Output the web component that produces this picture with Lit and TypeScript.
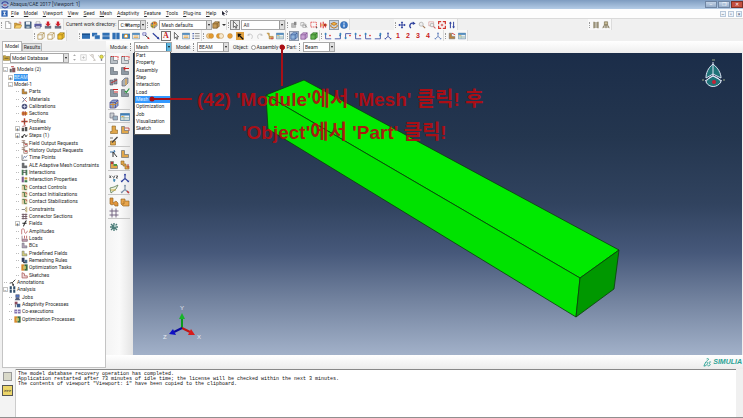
import { LitElement, html, svg, css, nothing, SVGTemplateResult } from "lit";
import { customElement, property } from "lit/decorators.js";
import { classMap } from "lit/directives/class-map.js";

const TAN = "#e0a64a";
const GREY = "#8e99a3";
const NAVY = "#2c3f9c";

const ell = (fill: string, extra: unknown = nothing) =>
  svg`<path d="M1.5 1.5h3v4h4v3h-7z" fill=${fill} stroke="#59616b" stroke-width=".6"/>${extra}`;
const redDots = svg`<path d="M2 1.5h7M9 1.5v3" stroke="#d22" stroke-width="1.2" stroke-dasharray="1.2 1"/>`;
const cube = (fill: string, line: string) =>
  svg`<path d="M1 3.5l2.5-2.5h5.5v5.5l-2.5 2.5h-5.5z" fill=${fill}/><path d="M1 3.5l2.5-2.5h5.5v5.5l-2.5 2.5h-5.5zM1 3.5h5.5v5.5M6.5 3.5l2.5-2.5" fill="none" stroke=${line} stroke-width=".8"/>`;
const win = (body: unknown) =>
  svg`<path d="M.5 1.5h9v7h-9z" fill="#eef3f8" stroke="#4a7696" stroke-width=".7"/><path d="M.5 1.5h9v2h-9z" fill="#3f7fb8"/>${body}`;
const axes = (a: string, b: string, mark: string) =>
  svg`<path d=${a} fill="none" stroke=${NAVY} stroke-width="1"/><path d=${b} fill="none" stroke="#2a8fc4" stroke-width="1.6"/><circle cx="7.5" cy="4.5" r="1" fill=${mark}/>`;
const triad = (c: string) =>
  svg`<path d="M5 1v4.500l-3.500 3M5 5.500l3.500 3" fill="none" stroke=${c} stroke-width="1.1"/><path d="M3.800 2.200l1.200-1.800 1.200 1.800zM.8 7.200l.2 2 2-.2zM9.200 7.200l-.2 2-2-.2z" fill=${c}/>`;
const chart = (c: string) =>
  svg`<path d="M1.500 1v8h7.500" fill="none" stroke="#555" stroke-width="1"/><path d="M3 7l2-4 1.500 2 2.500-3" fill="none" stroke=${c} stroke-width="1.200"/>`;

const ICONS: Record<string, SVGTemplateResult> = {
  app: svg`<path d="M1 4c1-4 7-4 8 0M1 6.500c1 3 7 3 8 0" fill="none" stroke="#38429a" stroke-width="1.300"/><path d="M3 5h4" stroke="#b3344a" stroke-width="1.200"/>`,
  vp: svg`<path d="M.5.500h9v9h-9z" fill="#2f64b5"/><path d="M3 3h4M3 7h4M5 3v4" stroke="#fff" stroke-width="1.200"/>`,
  fresh: svg`<path d="M2 .5h4l2.500 2.500v6.500h-6.500z" fill="#fff" stroke="#777" stroke-width=".7"/><path d="M6 .5v2.500h2.500" fill="none" stroke="#777" stroke-width=".7"/>`,
  open: svg`<path d="M.5 9v-6.500h3l1 1h3.500v1.500" fill="#d9a13d" stroke="#8c681f" stroke-width=".5"/><path d="M.5 9l2-4h7.500l-2 4z" fill="#f7cf6b" stroke="#8c681f" stroke-width=".5"/><path d="M6 1.500h2.500v2" fill="none" stroke="#c33" stroke-width=".8"/>`,
  save: svg`<path d="M1 1h8v8h-8z" fill="#4c6b8c" stroke="#2e4259" stroke-width=".6"/><path d="M2.500 1h5v3.500h-5z" fill="#e8eef4"/><path d="M3 6.500h4v2.500h-4z" fill="#a9b9c8"/>`,
  print: svg`<path d="M2.500 1h5v3h-5z" fill="#fff" stroke="#666" stroke-width=".5"/><path d="M.5 3.500h9v4h-9z" fill="#5a5aa5"/><path d="M2 6h6v3h-6z" fill="#c9c9e6" stroke="#445" stroke-width=".5"/>`,
  dbdown: svg`<path d="M1 6h8v3.500h-8z" fill="#6e7586"/><path d="M3.500.5h3v3h2l-3.500 3.500-3.500-3.500h2z" fill="#d0202c"/>`,
  palette: svg`<path d="M1 5c0-3 3-4.500 5.500-4s3 3 1.500 4-3 .5-2.500 2-2 2-3 1.200-1.500-2-1.500-3.200z" fill="#e3a83e" stroke="#6b5322" stroke-width=".6"/><circle cx="3" cy="3.500" r=".9" fill="#2c50b5"/><circle cx="6" cy="2.500" r=".9" fill="#c22"/><circle cx="2.800" cy="6.500" r=".9" fill="#2a9440"/><path d="M5 9l4.500-4" stroke="#444" stroke-width="1"/>`,
  box: cube("#c79a56", "#6a4e22"),
  arrow: svg`<path d="M3 .5v7.500l1.800-1.600 1.200 2.800 1.200-.6-1.200-2.600h2.300z" fill="#fff" stroke="#222" stroke-width=".8"/>`,
  greybox: svg`<path d="M2 3h5v5h-5z" fill="#bbb" stroke="#888" stroke-width=".6"/><path d="M5 1h3v4h-3z" fill="#888"/>`,
  ghost: svg`<path d="M1 2h4v4h-4zM3.500 4h4v4h-4z" fill="none" stroke="#999" stroke-width=".8"/><path d="M6 5l2.500 3" stroke="#666"/>`,
  redsel: svg`<path d="M1 1.500h7v6h-7z" fill="none" stroke="#e03131" stroke-width="1" stroke-dasharray="1.500 .8"/><path d="M7.500 7l2 1.500-1.800 1z" fill="#444"/>`,
  redbars: svg`<path d="M1 2v6M4 1v8M7 3v5" stroke="#d33" stroke-width="1.300"/><path d="M1 5h8" stroke="#e5a33a" stroke-width="1.200"/><path d="M5 3l4 2-4 2z" fill="#b02a2a"/>`,
  loop: svg`<path d="M1 3.500l4-2 4 2-4 2z" fill="#f6b242" stroke="#a05f10" stroke-width=".8"/><path d="M1 5v2l4 2 4-2v-2" fill="none" stroke="#c0761a" stroke-width="1.200"/>`,
  info: svg`<circle cx="5" cy="5" r="4.500" fill="#3b78c4" stroke="#21508f" stroke-width=".5"/><path d="M5 4.300v3.500M5 2v1.300" stroke="#fff" stroke-width="1.400"/>`,
  pan: svg`<path d="M5 1v8M1 5h8" stroke=${NAVY} stroke-width="1.300"/><path d="M3.500 2.500l1.500-2 1.500 2zM3.500 7.500l1.500 2 1.500-2zM2.500 3.500l-2 1.500 2 1.500zM7.500 3.500l2 1.500-2 1.500z" fill=${NAVY}/>`,
  rotate: svg`<path d="M3.500 9c-3-4 0-7 3.500-6" fill="none" stroke=${NAVY} stroke-width="1.600"/><path d="M6 .5l3.500 2.500-3.500 2z" fill=${NAVY}/>`,
  zoom: svg`<circle cx="4" cy="4" r="2.500" fill="#eee" stroke="#aaa" stroke-width=".9"/><path d="M6 6l3 3" stroke="#a77b5a" stroke-width="1.400"/>`,
  zoombox: svg`<path d="M1 1h6v5h-6z" fill="none" stroke="#c77" stroke-width=".6"/><circle cx="5" cy="5" r="2.300" fill="#eee" stroke="#999" stroke-width=".8"/><path d="M6.800 6.800l2.500 2.500" stroke="#c66" stroke-width="1.300"/>`,
  fit: svg`<path d="M.8 4v-3.200h3.200M6 .8h3.200v3.200M9.200 6v3.200h-3.200M4 9.200h-3.200v-3.200" fill="none" stroke="#d2342c" stroke-width="1.500"/><path d="M3.500 3.500h3v3h-3z" fill="#d77"/>`,
  updown: svg`<path d="M3 9v-7M7 1v7" stroke=${NAVY} stroke-width="1.200"/><path d="M1.200 3l1.800-2.500 1.800 2.500zM5.200 7l1.800 2.500 1.800-2.500z" fill=${NAVY}/>`,
  ladder: svg`<path d="M2.500 1v8M7.500 1v8M2.500 2.500h5M2.500 5h5M2.500 7.500h5" fill="none" stroke="#7f7556" stroke-width="1.400"/>`,
  stand: svg`<path d="M3 1h4v4h-4z" fill="#c9bd98" stroke="#7f7556" stroke-width=".9"/><path d="M1 9l2-4h4l2 4M1 7.500h8M5 5v4" fill="none" stroke="#7f7556" stroke-width="1"/>`,
  wire: cube("none", "#a47f33"),
  hidden: cube("#fff", "#a47f33"),
  shaded: cube("#f4c22e", "#8f6f16"),
  vp1: svg`<path d="M0 2h10v6.500h-10z" fill="#2f6fb4"/><path d="M0 2h10v1.500h-10z" fill="#174a83"/>`,
  vp2: svg`<path d="M0 1h6.500v4.500h-6.500z" fill="#2f6fb4"/><path d="M3.300 3.800h6.700v5.200h-6.700z" fill="#2f6fb4" stroke="#fff" stroke-width=".5"/>`,
  vp3: svg`<path d="M.5 1h9v3.700h-9zM.5 5.400h9v3.700h-9z" fill="#2f6fb4"/>`,
  vp4: svg`<path d="M.5 1h4.100v8h-4.100zM5.400 1h4.100v8h-4.100z" fill="#2f6fb4"/>`,
  vpring: svg`<path d="M0 2h10v6.500h-10z" fill="#3f7fb8"/><circle cx="5" cy="5.200" r="2.200" fill="#fff" stroke="#e39a2e" stroke-width="1.200"/>`,
  vpwin: win(svg`<path d="M2 5h6M2 7h6" stroke="#e39a2e" stroke-width="1"/>`),
  ann: svg`<path d="M1 1h4v3h-4z" fill="none" stroke="#44a" stroke-width=".8"/><path d="M4 4l4.500 4" stroke="#222" stroke-width="1.100"/><path d="M9.500 9l-3-.6 2-2z" fill="#c22"/>`,
  diag: svg`<path d="M1 1.500l7 6.500" stroke=${NAVY} stroke-width="1.500"/><path d="M9.500 9.500l-3.500-1 2.300-2.500z" fill=${NAVY}/>`,
  list: svg`<path d="M3.500 2h6M3.500 5h6M3.500 8h6" stroke="#666" stroke-width=".9"/><path d="M.7 2h1.500M.7 5h1.500M.7 8h1.500" stroke="#223f9c" stroke-width="1.400"/>`,
  both: svg`<circle cx="3.500" cy="5" r="3" fill="#f0ce92" stroke="#b98333" stroke-width=".6"/><circle cx="6.500" cy="5" r="3" fill="#e39a2e" stroke="#b98333" stroke-width=".6"/>`,
  inter: svg`<circle cx="3.500" cy="5" r="3" fill="#e39a2e" stroke="#b98333" stroke-width=".6"/><circle cx="6.500" cy="5" r="3" fill="#f7e9cf" stroke="#b98333" stroke-width=".6"/>`,
  ball: svg`<circle cx="5" cy="5" r="3" fill="#e8a03a" stroke="#b98333" stroke-width=".6"/>`,
  wand: svg`<path d="M0 0h10v10h-10z" fill="#e0a040"/><path d="M9 9l-5-5" stroke="#111" stroke-width="1.600"/><path d="M2 2l5 .5-4.500 4.500z" fill="#111"/>`,
  undo: svg`<path d="M2.500 3.500c4-2.500 7 1 4.500 5" fill="none" stroke="#c4c4c4" stroke-width="1.200"/><path d="M1 4l3-2.500.3 3.500z" fill="#c4c4c4"/>`,
  redo: svg`<path d="M7.500 3.500c-4-2.500-7 1-4.500 5" fill="none" stroke="#c4c4c4" stroke-width="1.200"/><path d="M9 4l-3-2.500-.3 3.500z" fill="#c4c4c4"/>`,
  steps: svg`<path d="M1 1.500h3v7h5v-3h-5" fill="#e3b65c" stroke="#93691c" stroke-width=".7"/><path d="M6 7h3v2h-3z" fill="#c55"/>`,
  meshblue: cube("#8fb4dd", "#2a4c8c"),
  meshpurple: cube("#c9a2d4", "#7a4a8c"),
  meshgreen: cube("#67b552", "#23641b"),
  ax1: axes("M2 1v7.500h7", "M.8 2.500h2.400", "#d22"),
  ax2: axes("M8 1v7.500h-7", "M6.800 2.500h2.400", "#27a"),
  ax3: axes("M2 9v-7h7", "M.8 7.500h2.400", "#d22"),
  triad: triad(NAVY),
  triadGrey: triad("#5a79b8"),
  triadRed: svg`${triad("#7a8fa8")}<path d="M7 7l2 2" stroke="#c33" stroke-width="1.200"/>`,
  Lbrown: ell("#b9813c", svg`<path d="M5 1.500l4 2" stroke="#c22" stroke-width="1"/>`),
  cursorhelp: svg`<path d="M1.500 1v6.500l1.600-1.400 1 2.400 1-.5-1-2.200h2z" fill="#223"/><path d="M6.500 2.500c0-2 3-1.500 2.500 0-.3 1-1.300 1-1.300 2.200M7.700 6v1.200" fill="none" stroke="#223" stroke-width="1.100"/>`,

  seedPart: ell("#b9c0c6", redDots),
  seedEdge: ell("#d5d9dc", redDots),
  meshPart: ell(GREY),
  meshRegion: ell(GREY, svg`<path d="M4 2.500h5M5.500 1l-1.800 1.500 1.800 1.500" stroke="#c22" stroke-width="1" fill="none"/>`),
  assignCtl: svg`<path d="M1 3h3v5h-3zM5 2h3v5h-3z" fill=${GREY} stroke="#445" stroke-width=".5"/><path d="M2 6l6-3" stroke="#b33" stroke-width="1"/>`,
  assignStack: svg`<path d="M2 4l3-3h3v5l-3 3h-3z" fill="#a9b0b6" stroke="#556" stroke-width=".6"/><path d="M6 2v6" stroke="#e0a64a" stroke-width="1.300"/>`,
  assignElem: ell(GREY, svg`<path d="M4 1.500h5M5 4h4" stroke="#c22" stroke-width="1.200"/>`),
  verify: ell(GREY, svg`<path d="M5 3l1.300 1.500 3-4" fill="none" stroke="#2a9440" stroke-width="1.200"/>`),
  fullmesh: svg`${cube("#8ba3d4", "#4c4c8c")}<path d="M1 5.500h5.500l2.500-2.500M4 3.500v5.500" fill="none" stroke="#d28b2d" stroke-width=".9"/>`,
  pair: svg`<path d="M1 1h4v5h-4z" fill="#c9ced2" stroke="#667" stroke-width=".6"/><path d="M4 4h4.500v4h-4.500z" fill="#9eb4c4" stroke="#667" stroke-width=".6"/>`,
  table: win(svg`<path d="M1 5.500h8M1 7h8M4 3.500v5" stroke="#8a9" stroke-width=".6"/><path d="M1.500 4h2v1h-2z" fill="#e3a83e"/>`),
  goldA: svg`<path d="M3 1h3.500v4h2v3.500h-7v-2h1.500z" fill=${TAN} stroke="#8a6321" stroke-width=".6"/>`,
  goldB: ell(TAN, svg`<path d="M5 3h4v3" fill="none" stroke="#b33" stroke-width=".8"/>`),
  goldC: svg`<path d="M1.500 5h5v4h-5z" fill=${TAN} stroke="#8a6321" stroke-width=".6"/><path d="M3 6.500l5.500-5.500" stroke="#444" stroke-width="1.200"/><path d="M1 2h3" stroke="#777"/>`,
  pick: svg`<path d="M1 3h5l-1-2" fill="none" stroke="#3570a8" stroke-width="1"/><path d="M4 3l4 5M4 3v5" stroke="#333" stroke-width="1"/>`,
  goldL: ell(TAN),
  goldG: ell(TAN, svg`<path d="M2 2h2v2h-2z" fill="#b33"/><path d="M5 4h3v2h-3z" fill="#4c9a3c"/>`),
  goldZ: svg`<path d="M1 1h3v3h2v2h3v3h-4v-3h-2v-1.500h-2z" fill=${TAN} stroke="#8a6321" stroke-width=".6"/><path d="M8 4v4" stroke="#b33" stroke-width=".9"/>`,
  xyz: svg`<path d="M.5 2.500l1.500 2.500M2 2.500l-1.500 2.500M3.500 3l1 1.500M6 2.500l-1.500 3M7 3h2l-2 2h2" fill="none" stroke="#333" stroke-width=".7"/><path d="M4 7h2.500M5.200 6v3" stroke="#27a" stroke-width="1"/>`,
  plane: svg`<path d="M1 4l4-1 4-2-2 4-5 4z" fill="#eef4e0" stroke="#5f7c54" stroke-width=".8"/><path d="M2 6h5" stroke="#caa22c" stroke-width=".9"/>`,
  bend: svg`<path d="M1 1h3v5l3-2 2 2v3h-3l-1-2-2 1-2-1z" fill="#e2953c" stroke="#8a5a1a" stroke-width=".6"/>`,
  folder: svg`<path d="M1 2h4v2h4v5h-6l-2-2z" fill="#e8a54c" stroke="#8a5a1a" stroke-width=".6"/><path d="M4 4v3l-2 0" fill="none" stroke="#8a5a1a" stroke-width=".6"/>`,
  hash: svg`<path d="M3 .5v2.500h-2.500M7 .5v2.500h2.500M3 9.500v-2.500h-2.500M7 9.500v-2.500h2.500M3 3h4v4h-4z" fill="none" stroke="#6a5a78" stroke-width=".9"/>`,
  gear: svg`<path d="M2 2l6 6M8 2l-6 6M5 1v8M1 5h8" stroke="#4c7c78" stroke-width="1.400"/><circle cx="6" cy="4" r="1.200" fill="#a6c4c0"/>`,

  db: svg`<path d="M.5 2.500h3l1 1h5v5.500h-9z" fill="#d9b13d" stroke="#6d5a1c" stroke-width=".8"/><path d="M2 6h6" stroke="#333" stroke-width="1"/>`,
  sort: svg`<path d="M5 .5l2 2.500h-4zM5 9.500l2-2.500h-4z" fill="#aaa"/>`,
  filter: svg`<path d="M1 1h8v8h-8z" fill="#fafafa" stroke="#c0c0c0" stroke-width=".8"/><path d="M3 5h4M5 3v4" stroke="#aaa" stroke-width=".8"/>`,
  brush: svg`<path d="M1 1l4 3M3 1h3v4M5 4l4 5M6 9h3" fill="none" stroke="#b3aaa2" stroke-width="1"/>`,
  bulb: svg`<circle cx="5" cy="4" r="2.500" fill="#e6dd4c" stroke="#8a8a22" stroke-width=".8"/><path d="M4 7.500h2v2h-2z" fill="#556"/><path d="M0 2l1.500 1M10 2l-1.500 1" stroke="#999" stroke-width=".8"/>`,
  models: svg`<path d="M1 4h3v5h-3z" fill="#666"/><path d="M4.500 2.500h4.500v6.500h-4.500z" fill="#87545a"/><path d="M3 1h4" stroke="#b33" stroke-width="1.300"/>`,
  parts: ell("#c98a34"),
  materials: svg`<path d="M2 2l3 3-3 4M5 5l3-3" fill="none" stroke="#557" stroke-width="1.200"/><path d="M5 5l3.500 3.500" stroke="#c66" stroke-width="1.200"/>`,
  calib: svg`<circle cx="5" cy="5" r="4" fill="#52577f"/><path d="M2.500 5h5M5 2.500v5" stroke="#d6d9ee" stroke-width="1.100"/>`,
  sections: svg`<path d="M1 3h8v4h-8z" fill="#d88a2d"/><path d="M3 1.500v7M6 1.500v7" stroke="#9a2f2f" stroke-width="1.200"/>`,
  profiles: svg`<path d="M5 .5v9M.5 5h9" stroke="#b9402e" stroke-width="2"/><circle cx="5" cy="5" r="1.200" fill="#555"/>`,
  assembly: svg`<path d="M1 4h3.500v5h-3.500zM5.500 3h3.500v6h-3.500z" fill="#535353"/><path d="M2 2l5-1" stroke="#a55" stroke-width="1.300"/>`,
  stepsT: svg`<circle cx="2" cy="7" r="1.600" fill="#333"/><path d="M3 6l2-3 2 4 2-3" fill="none" stroke="#333" stroke-width="1.300"/>`,
  output: svg`<path d="M1 1h5M1 3.500h5M4 1v8h5v-4h-5" fill="none" stroke="#865" stroke-width="1"/><path d="M5.500 6.500h3" stroke="#c33" stroke-width="1.200"/>`,
  time: chart("#6d7fa5"),
  ale: ell("#6e6e6e"),
  inters: svg`<path d="M1 1h2.500v8h-2.500zM6.500 1h2.500v8h-2.500z" fill="#4a7c58"/><path d="M3 5h4M3 2.500h4" stroke="#333" stroke-width="1"/>`,
  interp: svg`<path d="M1 1h3v8h-3z" fill="#7a5a8c"/><path d="M5 2h4v3h-4z" fill="#c99a3a"/><path d="M5 6h4v3h-4z" fill="#3f7c4c"/>`,
  contact: svg`<path d="M1 1h8v8h-8z" fill="#d9c9a2"/><path d="M2 2h3v6h3" fill="none" stroke="#4c7c4a" stroke-width="1.400"/><path d="M6 2l3 2" stroke="#b5403a" stroke-width="1.200"/>`,
  constr: svg`<path d="M1 5h4l3-3M5 5l3 3" fill="none" stroke="#777" stroke-width="1.200"/><path d="M6.500 1h2.500v8h-2.500z" fill="#d0bd8c"/>`,
  conn: svg`<path d="M1 2h8M1 5h8M1 8h8M3 1v8M7 1v8" stroke="#6d5560" stroke-width="1.300"/>`,
  fields: svg`<path d="M3 9c2 0 2-8 5-8M2 4.500h6" fill="none" stroke="#222" stroke-width="1.500"/>`,
  amp: svg`<path d="M1 9v-7c3-2 4 0 4 3s3 4 4-1" fill="none" stroke="#b66" stroke-width="1.200"/>`,
  loads: svg`<path d="M1.500 1v8h7.500v-3h-7" fill="#c9a4b5" stroke="#645" stroke-width=".8"/><path d="M5 1v4M8 1v4" stroke="#a33" stroke-width="1"/>`,
  bcs: ell("#b5a4b8"),
  predef: ell("#d2ca7a"),
  remesh: svg`<path d="M1 1h4v6h-4z" fill="#333c5c"/><path d="M5 4h4v5h-4z" fill="#486c8c"/><path d="M3 8h3" stroke="#333" stroke-width="1.500"/>`,
  opt: svg`<path d="M.5.5h4.500v9h-4.500z" fill="#d8892c"/><path d="M5 .5h4.500v9h-4.500z" fill="#3c6c44"/><path d="M3 3h4v4h-4z" fill="#c9c36a"/>`,
  sketch: svg`<path d="M1.500 1v7.500h7.500v-3h-4v-3z" fill="#f2dada" stroke="#a35050" stroke-width="1"/>`,
  annot: svg`<path d="M1 6l4-1 4-4M5 5l1 4" fill="none" stroke="#333" stroke-width="1.300"/><circle cx="6" cy="8.500" r="1.300" fill="#333"/>`,
  analysis: svg`<path d="M1 .5h3v4h-3zM1 5.500h3v4h-3zM6 .5h3v4h-3zM6 5.500h3v4h-3z" fill="#33506c"/>`,
  jobs: svg`<path d="M2.500 1h5v4h-5z" fill="#5678c4" stroke="#334" stroke-width=".6"/><path d="M1 9l2-3.500h4l2 3.500z" fill="#55607c"/>`,
  adapt: svg`<path d="M1 1h4v4h-4z" fill="#8c4a5c"/><path d="M4 4h5v5h-5z" fill="#3c5c8c"/><path d="M2 5v4" stroke="#555" stroke-width="1.200"/>`,
  coexec: svg`<path d="M.5 2h4v6h-4zM5.500 2h4v6h-4z" fill="#8575b0"/><path d="M1 5h8" stroke="#e2dcf2" stroke-width="1"/>`,
};

const baseCss = css`
  :host { font-family: Roboto, "Liberation Sans", "Noto Sans CJK KR", sans-serif; font-size: 5px; line-height: 7px; color: #2a2a2a; }
  * { box-sizing: border-box; }
  button, select, input { font: inherit; color: inherit; margin: 0; }
  button { border: 0; background: none; padding: 0; }
`;

@customElement("ui-icon")
export class UiIcon extends LitElement {
  @property() name = "";
  static styles = css`
    :host { display: inline-flex; flex: none; width: 8px; height: 8px; }
    svg { width: 100%; height: 100%; display: block; }
  `;
  render() {
    return html`<svg viewBox="0 0 10 10" aria-hidden="true">${ICONS[this.name]}</svg>`;
  }
}

@customElement("tool-group")
export class ToolGroup extends LitElement {
  @property({ type: Array }) icons: string[] = [];
  static styles = [baseCss, css`
    :host { display: flex; align-items: center; flex: none; height: 11px; background: #f8f8f8; border-right: 1px solid #dcdcdc; }
    .grip { width: 1px; height: 6px; margin: 0 1px; border-left: 1px dotted #9a9a9a; }
    button { width: 10px; height: 10px; display: grid; place-items: center; flex: none; }
    .pressed { background: #c9d4e2; outline: 1px solid #8f9bab; outline-offset: -1px; }
    .num { color: #c8201c; font: bold 7px/10px "Liberation Sans", sans-serif; }
    .letter { color: #c8201c; font: bold 8px/8px "Liberation Serif", serif; outline: 1px solid #777; outline-offset: -1px; }
  `];
  render() {
    return html`<span class="grip"></span>${this.icons.map((raw) => {
      const pressed = raw.startsWith("!");
      const name = pressed ? raw.slice(1) : raw;
      const isText = name.length === 1;
      return html`<button aria-label=${name} class=${classMap({ pressed, num: isText && name !== "A", letter: name === "A" })}>
        ${isText ? name : html`<ui-icon name=${name}></ui-icon>`}
      </button>`;
    })}<slot></slot>`;
  }
}

@customElement("combo-box")
export class ComboBox extends LitElement {
  @property() value = "";
  @property() label = "";
  @property({ type: Boolean }) spin = false;
  @property({ type: Boolean }) active = false;
  static styles = [baseCss, css`
    :host { display: flex; align-items: center; flex: none; height: 10px; }
    .spin { width: 3px; height: 8px; border-left: 1px dotted #888; margin-right: 1px; }
    .field { position: relative; display: flex; flex: 1; height: 10px; background: #fff; border: 1px solid #a9a9a9; }
    select { appearance: none; border: 0; background: none; flex: 1; width: 100%; padding: 0 5px 0 1px; outline: 0; line-height: 8px; border-radius: 0; }
    .drop { position: absolute; right: 0; top: 0; bottom: 0; width: 5px; background: #dedede; border-left: 1px solid #999; display: grid; place-items: center; pointer-events: none; }
    .drop::after { content: ""; border: 1px solid transparent; border-top: 2px solid #111; border-bottom: 0; }
    .drop.active { background: #62b6dc; border-color: #2d7fae; }
  `];
  render() {
    return html`${this.spin ? html`<span class="spin"></span>` : nothing}
      <span class="field"><select aria-label=${this.label}><option>${this.value}</option></select>
      <span class=${classMap({ drop: true, active: this.active })}></span></span>`;
  }
}

type Row = { text: string; icon?: string; level: number; toggle?: string; selected?: boolean };
const kids = (level: number, list: string): Row[] =>
  list.split("|").map((s) => {
    const [text, icon, toggle] = s.split(":");
    return { text, icon, level, toggle };
  });
const ROWS: Row[] = [
  { text: "Models (2)", icon: "models", level: 0, toggle: "−" },
  { text: "BEAM", level: 1, toggle: "+", selected: true },
  { text: "Model-1", level: 1, toggle: "−" },
  ...kids(2, "Parts:parts|Materials:materials|Calibrations:calib|Sections:sections|Profiles:profiles|Assembly:assembly:+|Steps (1):stepsT:+|Field Output Requests:output|History Output Requests:output|Time Points:time|ALE Adaptive Mesh Constraints:ale|Interactions:inters|Interaction Properties:interp|Contact Controls:contact|Contact Initializations:contact|Contact Stabilizations:contact|Constraints:constr|Connector Sections:conn|Fields:fields:+|Amplitudes:amp|Loads:loads|BCs:bcs|Predefined Fields:predef|Remeshing Rules:remesh|Optimization Tasks:opt|Sketches:sketch"),
  { text: "Annotations", icon: "annot", level: 0 },
  { text: "Analysis", icon: "analysis", level: 0, toggle: "−" },
  ...kids(3, "Jobs:jobs|Adaptivity Processes:adapt|Co-executions:coexec|Optimization Processes:opt"),
];

@customElement("model-tree")
export class ModelTree extends LitElement {
  static styles = [baseCss, css`
    :host { display: flex; flex-direction: column; flex: none; width: 106px; background: #f0f0f0; padding: 0 0 1px 2px; }
    .tabs { display: flex; align-items: flex-end; height: 10px; }
    .tabs button { height: 8px; width: 20px; border: 1px solid #b5b5b5; border-bottom: 0; background: #e2e2e2; line-height: 7px; }
    .tabs .on { height: 10px; background: #fff; }
    .panel { flex: 1; background: #fff; border: 1px solid #c4c4c4; overflow: hidden; }
    .bar { display: flex; align-items: center; height: 12px; border-bottom: 1px solid #d0d0d0; gap: 2px; }
    .bar combo-box { width: 59px; margin-left: -2px; }
    .bar ui-icon { width: 7px; height: 7px; }
    .tree { display: grid; grid-auto-rows: 7px 8px 7px; padding: 2px 0 0; list-style: none; margin: 0; }
    .row { display: flex; align-items: center; white-space: nowrap; }
    .l1 { padding-left: 5px; }
    .l2 { padding-left: 12px; }
    .l3 { padding-left: 5px; }
    .toggle, .blank { width: 5px; height: 5px; flex: none; font-size: 5px; line-height: 4px; display: grid; place-items: center; margin-right: 1px; color: #444; }
    .toggle { border: 1px solid #c2c2c2; }
    .blank::after { content: ""; width: 3px; border-top: 1px dotted #bbb; }
    .row ui-icon { width: 7px; height: 7px; margin-right: 1px; }
    .sel { background: #3a95ee; color: #d8ecff; line-height: 7px; }
  `];
  render() {
    return html`<div class="tabs"><button class="on">Model</button><button>Results</button></div>
      <div class="panel">
        <div class="bar"><ui-icon name="db"></ui-icon><combo-box label="Tree source" value="Model Database"></combo-box>
          <ui-icon name="sort"></ui-icon><ui-icon name="filter"></ui-icon><ui-icon name="brush"></ui-icon><ui-icon name="bulb"></ui-icon></div>
        <ul class="tree">${ROWS.map((r) => html`<li class="row l${r.level}">
          <span class=${r.toggle ? "toggle" : "blank"}>${r.toggle ?? nothing}</span>
          ${r.icon ? html`<ui-icon name=${r.icon}></ui-icon>` : nothing}<span class=${r.selected ? "sel" : ""}>${r.text}</span></li>`)}</ul>
      </div>`;
  }
}

const TOOLBOX: string[][] = [
  ["seedPart", "seedEdge", "meshPart", "meshRegion", "assignCtl", "assignStack", "assignElem", "verify", "fullmesh"],
  ["pair", "table"],
  ["goldA", "goldB", "goldC"],
  ["pick", "goldL", "goldG", "goldZ"],
  ["xyz", "triad", "plane", "triadRed"],
  ["bend", "folder", "hash"],
  ["gear"],
];

@customElement("tool-box")
export class ToolBox extends LitElement {
  static styles = [baseCss, css`
    :host { flex: none; width: 27px; padding: 1px 3px 0 2px; background: linear-gradient(90deg, #f4f4f4, #fafafa 50%, #e4e4e4); }
    .set { display: grid; grid-template-columns: 11px 11px; grid-auto-rows: 11px; place-items: center; border-bottom: 1px solid #c6c6c6; margin-bottom: 1px; }
    .set:last-child { border: 0; margin-top: 2px; }
    button, ui-icon { width: 10px; height: 10px; display: block; }
  `];
  render() {
    return TOOLBOX.map((set) => html`<div class="set">${set.map((n) => html`<button aria-label=${n}><ui-icon name=${n}></ui-icon></button>`)}</div>`);
  }
}

@customElement("view-port")
export class ViewPort extends LitElement {
  static styles = css`
    :host { display: block; flex: 1; min-width: 0; min-height: 0; overflow: hidden; background: linear-gradient(#1b2d49, #24364f 28%, #31435f 50%, #46587a 66%, #73839f 82%, #a2b1c9); }
    svg { display: block; width: 100%; height: 100%; }
    .lbl { font: 6px "Liberation Sans", sans-serif; fill: #e8ecf2; }
  `;
  render() {
    return html`<svg viewBox="133 53 609 302" role="img" aria-label="Beam part">
      <g stroke="#0b3d0b" stroke-width=".8" stroke-linejoin="round">
        <path d="M266 95L304 80L619 250L580 278z" fill="#00ea00"/>
        <path d="M266 95L580 278L576 317L268 129z" fill="#00e200"/>
        <path d="M580 278L619 250L614 289L576 317z" fill="#009800"/>
      </g>
      <path d="M182 328v-11" stroke="#0a9a1c" stroke-width="2"/><path d="M179 319l3-6 3 6z" fill="#18b52a"/>
      <path d="M182 328l8 4" stroke="#c01414" stroke-width="2"/><path d="M188 335l7 0-4-6z" fill="#d81c1c"/>
      <path d="M182 328l-8 4" stroke="#0a0a9c" stroke-width="2"/><path d="M176 335l-7-1 4-5z" fill="#1010c4"/>
      <text class="lbl" x="180" y="310">Y</text><text class="lbl" x="197" y="339">X</text><text class="lbl" x="163" y="339">Z</text>
      <g fill="#1f7378" stroke="#dde3f4" stroke-width="1">
        <path d="M713 64c-5 4-7 9-7 14l7-4 8 4c0-5-3-10-8-14z"/>
        <path d="M706 82c2-4 4-5 7-6 4 1 7 3 8 6-4 6-12 6-15 0z"/>
        <path d="M713 62v14l-8 5M713 76l9 5" fill="none"/>
      </g>
      <circle cx="714" cy="82" r="2" fill="#c42336"/>
      <path d="M712 60h3M703 79v2M724 79v2" stroke="#9aa884" stroke-width="1"/>
    </svg>`;
  }
}

const MODULES = ["Part", "Property", "Assembly", "Step", "Interaction", "Load", "Mesh", "Optimization", "Job", "Visualization", "Sketch"];
const MENUS = ["File", "Model", "Viewport", "View", "Seed", "Mesh", "Adaptivity", "Feature", "Tools", "Plug-ins", "Help"];

@customElement("app-root")
export class AppRoot extends LitElement {
  static styles = [baseCss, css`
    :host { display: flex; flex-direction: column; height: 100vh; position: relative; overflow: hidden; background: #f0f0f0; }
    .title { display: flex; align-items: center; height: 9px; flex: none; padding-left: 1px; gap: 1px; background: linear-gradient(#7e9cc0, #b4cce6); color: #1d2b3c; }
    .title .name { flex: 1; }
    .win { display: flex; gap: 1px; }
    .win button { width: 12px; height: 7px; background: linear-gradient(#c3d3e6, #96aecb); border: 1px solid #7086a3; font-size: 5px; line-height: 5px; color: #fff; }
    .win .close { background: #c4503f; border-color: #7c3026; }
    .menu { display: flex; align-items: center; height: 10px; flex: none; background: #fdfdfd; border-bottom: 1px solid #dadada; padding-left: 1px; }
    .menu ui-icon { margin-right: 3px; width: 7px; height: 7px; }
    .menu nav { display: flex; gap: 5px; flex: 1; align-items: center; }
    .menu nav button::first-letter { text-decoration: underline; }
    .mdi { display: flex; gap: 2px; padding-right: 1px; }
    .mdi button { width: 6px; height: 6px; border: 1px solid #b8c8da; background: #eef3f9; color: #456; font-size: 5px; line-height: 4px; }
    .tools { display: flex; height: 11px; flex: none; align-items: center; background: #f0f0f0; }
    .field { display: flex; align-items: center; gap: 2px; margin-left: 2px; }
    .cwd { width: 28px; }
    .defs { width: 53px; }
    .all { width: 44px; margin-left: 1px; }
    .tri { border: 2px solid transparent; border-top-color: #333; border-bottom: 0; margin-left: 2px; }
    .pick { width: 10px; height: 10px; border: 1px solid #8c8c8c; background: #e8e8e8; display: grid; place-items: center; }
    .g-view { margin-left: 44px; }
    .g-stand { margin-left: 130px; }
    .g-render { margin-left: 33px; }
    .g-vp { margin-left: 11px; }
    .main { display: flex; flex: 1; min-height: 0; }
    .side { display: flex; flex-direction: column; flex: 1; min-width: 0; }
    .context { display: flex; align-items: center; height: 12px; flex: none; padding-left: 4px; gap: 4px; background: linear-gradient(#fff, #eee); position: relative; }
    .context label { display: flex; align-items: center; gap: 2px; }
    .w-mod { width: 42px; }
    .w-model, .w-part { width: 36px; }
    .objects { display: flex; align-items: center; gap: 2px; }
    .objects label { gap: 1px; }
    .objects input { appearance: none; width: 5px; height: 5px; border: 1px solid #9a9a9a; border-radius: 50%; background: #fff; }
    .objects input:checked { background: #b00; border-color: #b00; }
    .list { position: absolute; left: 28px; top: 11px; width: 37px; z-index: 2; margin: 0; padding: 0 0 1px; list-style: none; background: #fff; border: 1px solid #555; border-top: 0; display: grid; grid-auto-rows: 7px 8px 7px; line-height: 7px; }
    .list li { padding-left: 1px; }
    .list .on { background: #3399ff; color: #e2f0ff; }
    .work { display: flex; flex: 1; min-height: 0; padding-right: 1px; }
    .brand { display: flex; align-items: center; justify-content: flex-end; height: 14px; flex: none; background: linear-gradient(#fff, #ececec); color: #2aa193; font: italic bold 7px/14px "Liberation Sans", sans-serif; gap: 1px; padding-right: 1px; }
    .brand svg { width: 9px; height: 9px; }
    .messages { display: flex; flex: none; height: 49px; border-bottom: 1px solid #8f8f8f; background: #f0f0f0; padding-right: 7px; }
    .switch { width: 16px; display: flex; flex-direction: column; gap: 4px; align-items: center; padding-top: 3px; border-right: 1px solid #ccc; background: #f3f3f3; }
    .switch button { width: 9px; height: 9px; background: #d9d9c9; border: 1px solid #999; font: bold 4px/7px "Liberation Sans", sans-serif; }
    .switch .cli { width: 11px; height: 11px; background: #ecd569; border-color: #555; }
    .log { flex: 1; margin: 0; padding: 2px; background: #fff; border-top: 1px solid #888; font: 5px/5px "Liberation Mono", monospace; color: #111; }
    .callout { position: absolute; color: #b50c12; font: bold 19px/33px "Liberation Sans", "Noto Sans CJK KR", sans-serif; left: 197px; top: 83px; z-index: 3; margin: 0; white-space: nowrap; opacity: .92; }
    .callout span { display: block; }
    .callout b { font-size: 20px; line-height: 20px; font-weight: 700; }
    .callout .second { padding-left: 45px; }
    .pointers { position: absolute; left: 0; top: 0; width: 300px; height: 110px; z-index: 3; pointer-events: none; }
  `];
  render() {
    return html`
      <header class="title"><ui-icon name="app"></ui-icon><span class="name">Abaqus/CAE 2017 [Viewport: 1]</span>
        <span class="win"><button>–</button><button>❐</button><button class="close">✕</button></span></header>
      <div class="menu"><ui-icon name="vp"></ui-icon>
        <nav>${MENUS.map((m) => html`<button>${m}</button>`)}<ui-icon name="cursorhelp"></ui-icon></nav>
        <span class="mdi"><button>–</button><button>▫</button><button>×</button></span></div>
      <div class="tools">
        <tool-group .icons=${["fresh", "open", "save", "print", "dbdown", "dbdown"]}></tool-group>
        <label class="field"><span>Current work directory:</span><combo-box class="cwd" label="Current work directory" value="C:₩temp"></combo-box></label>
        <tool-group .icons=${["palette"]}><combo-box class="defs" label="Color mapping" value="Mesh defaults"></combo-box>
          <ui-icon name="box"></ui-icon><span class="tri"></span></tool-group>
        <tool-group><button class="pick" aria-label="Select"><ui-icon name="arrow"></ui-icon></button>
          <combo-box class="all" label="Selection filter" value="All"></combo-box></tool-group>
        <tool-group .icons=${["greybox", "ghost", "redsel", "redbars", "!loop", "info"]}></tool-group>
        <tool-group class="g-view" .icons=${["pan", "rotate", "zoom", "zoombox", "fit", "updown"]}></tool-group>
        <tool-group class="g-stand" .icons=${["ladder", "stand"]}></tool-group>
      </div>
      <div class="tools">
        <tool-group class="g-render" .icons=${["wire", "hidden", "shaded"]}></tool-group>
        <tool-group class="g-vp" .icons=${["vp1", "vp2", "vp3", "vp4", "vpring", "vpwin", "ann", "diag", "A", "arrow", "vpwin", "list"]}></tool-group>
        <tool-group .icons=${["both", "inter", "ball", "wand", "undo", "redo", "steps", "table"]}></tool-group>
        <tool-group .icons=${["!meshblue", "meshpurple", "meshgreen"]}></tool-group>
        <tool-group .icons=${["ax1", "ax2", "ax3", "ax1", "ax1", "ax2", "triad", "1", "2", "3", "4", "triadGrey"]}></tool-group>
        <tool-group .icons=${["Lbrown", "table"]}></tool-group>
      </div>
      <div class="main">
        <model-tree></model-tree>
        <div class="side">
          <div class="context">
            <label>Module:<combo-box class="w-mod" spin active label="Module" value="Mesh"></combo-box></label>
            <label>Model:<combo-box class="w-model" spin label="Model" value="BEAM"></combo-box></label>
            <div class="objects"><span>Object:</span>
              <label><input type="radio" name="object" />Assembly</label>
              <label><input type="radio" name="object" checked />Part:</label>
              <combo-box class="w-part" spin label="Part" value="Beam"></combo-box></div>
            <ul class="list" role="listbox">${MODULES.map((m) => html`<li role="option" class=${m === "Mesh" ? "on" : ""}>${m}</li>`)}</ul>
          </div>
          <div class="work"><tool-box></tool-box><view-port></view-port></div>
          <div class="brand"><svg viewBox="0 0 10 10"><path d="M4 1c3-1 3 1 0 2.500M3 4.500c3-1 3 4-2 4.500l2-4.500M9 4.500c-3-.5-3 1.500-1.500 2s0 3-2.500 2" fill="none" stroke="#2aa193" stroke-width="1"/></svg>SIMULIA</div>
        </div>
      </div>
      <footer class="messages">
        <div class="switch"><button aria-label="Messages"></button><button class="cli">&gt;&gt;&gt;</button></div>
        <pre class="log">The model database recovery operation has completed.
Application restarted after 73 minutes of idle time; the license will be checked within the next 3 minutes.
The contents of viewport "Viewport: 1" have been copied to the clipboard.</pre>
      </footer>
      <svg class="pointers" viewBox="0 0 300 110" stroke="#a80f16" stroke-width="2" fill="#b50c12">
        <path d="M282 47v39M152 99h40"/><circle cx="282" cy="47" r="1.500"/><circle cx="152" cy="99" r="1.500"/></svg>
      <p class="callout"><span>(42) 'Module'<b>에서</b> 'Mesh' <b>클릭</b>! <b>후</b></span><span class="second">'Object'<b>에서</b> 'Part' <b>클릭</b>!</span></p>
    `;
  }
}
